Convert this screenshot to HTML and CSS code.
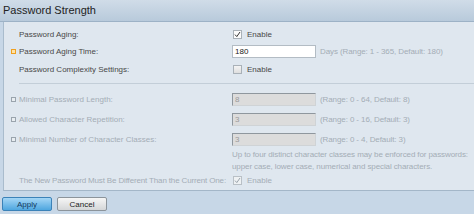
FILE: index.html
```html
<!DOCTYPE html>
<html>
<head>
    <title>Password Strength</title>
    <link rel="stylesheet" href="styles.css">
</head>
<body>
    <div class="page-title">Password Strength</div>

    <div class="panel">
        <div class="row r1">
            <span></span>
            <label>Password Aging:</label>
            <div class="ctrl">
                <span class="chk on"><svg width="7" height="7" viewBox="0 0 7 7"><path d="M1 3.6 L2.8 5.6 L6 1" fill="none" stroke="#333" stroke-width="1"/></svg></span>
                <span class="chk-text">Enable</span>
            </div>
        </div>
        <div class="row r2">
            <span class="mark req"></span>
            <label>Password Aging Time:</label>
            <div class="ctrl">
                <input type="text" class="field" value="180">
                <span class="hint">Days (Range: 1 - 365, Default: 180)</span>
            </div>
        </div>
        <div class="row r3">
            <span></span>
            <label>Password Complexity Settings:</label>
            <div class="ctrl">
                <span class="chk"></span>
                <span class="chk-text">Enable</span>
            </div>
        </div>

        <div class="sep"></div>

        <div class="row r4 off">
            <span class="mark"></span>
            <label>Minimal Password Length:</label>
            <div class="ctrl">
                <input type="text" class="field" value="8" disabled>
                <span class="hint">(Range: 0 - 64, Default: 8)</span>
            </div>
        </div>
        <div class="row r4 off">
            <span class="mark"></span>
            <label>Allowed Character Repetition:</label>
            <div class="ctrl">
                <input type="text" class="field" value="3" disabled>
                <span class="hint">(Range: 0 - 16, Default: 3)</span>
            </div>
        </div>
        <div class="row r6 off">
            <span class="mark"></span>
            <label>Minimal Number of Character Classes:</label>
            <div class="ctrl">
                <input type="text" class="field" value="3" disabled>
                <span class="hint">(Range: 0 - 4, Default: 3)</span>
            </div>
        </div>
        <div class="row help">
            <span></span>
            <span></span>
            <div class="help-text">Up to four distinct character classes may be enforced for passwords:<br>upper case, lower case, numerical and special characters.</div>
        </div>
        <div class="row r7 off">
            <span></span>
            <label class="long">The New Password Must Be Different Than the Current One:</label>
            <div class="ctrl">
                <span class="chk on dim"><svg width="7" height="7" viewBox="0 0 7 7"><path d="M1 3.6 L2.8 5.6 L6 1" fill="none" stroke="#9aa3ab" stroke-width="1"/></svg></span>
                <span class="chk-text">Enable</span>
            </div>
        </div>
    </div>

    <div class="buttons">
        <button class="btn apply">Apply</button>
        <button class="btn cancel">Cancel</button>
    </div>
</body>
</html>
```

FILE: styles.css
```css
body {
    margin: 0;
    font-family: "Liberation Sans", Arial, sans-serif;
    font-size: 8px;
    color: #333;
    background: #c7d7e7;
    width: 474px;
    height: 214px;
    overflow: hidden;
}

.page-title {
    height: 21px;
    line-height: 20px;
    padding-left: 3px;
    font-size: 11px;
    color: #222;
    background: linear-gradient(#d0dce8, #b8cadb);
    border-bottom: 1px solid #9db2c6;
}

.panel {
    margin-left: 3px;
    background: #dfe7ef;
    border-left: 1px solid #a9bccd;
    border-bottom: 1px solid #a3b6c8;
    padding-top: 4px;
    padding-bottom: 3px;
}

.row {
    display: grid;
    grid-template-columns: 15px 213px 1fr;
    align-items: center;
    white-space: nowrap;
}

.r1 { height: 16px; }
.r2 { height: 18px; }
.r3 { height: 18px; }
.r4 { height: 20px; }
.r6 { height: 20px; }
.r7 { height: 14px; }

label {
    color: #484848;
}

label.long {
    letter-spacing: -0.15px;
}

.off label,
.off .hint,
.off .chk-text {
    color: #a4adb6;
}

.mark {
    width: 3px;
    height: 3px;
    margin-left: 7px;
    border: 1px solid #9aa4ad;
    background: #e8edf1;
}

.mark.req {
    border-color: #f0a020;
    background: #fde3a8;
}

.ctrl {
    display: flex;
    align-items: center;
}

.chk {
    width: 7px;
    height: 7px;
    margin-left: 1px;
    border: 1px solid #a9b1b8;
    background: linear-gradient(#f4f4f4, #dedede);
    display: flex;
    align-items: center;
    justify-content: center;
}

.chk.on {
    background: #fbfbfb;
}

.chk.dim {
    border-color: #b9c0c6;
    background: #eef1f3;
}

.chk-text {
    margin-left: 5px;
    color: #484848;
}

.field {
    width: 84px;
    height: 13px;
    box-sizing: border-box;
    margin: 0;
    padding: 0 2px;
    font-family: "Liberation Sans", Arial, sans-serif;
    font-size: 8px;
    color: #222;
    background: #fff;
    border: 1px solid #b3bcc4;
}

.field:disabled {
    background: #dcdcdc;
    color: #9a9a9a;
    border-color: #8f979e #cfd3d6 #cfd3d6 #8f979e;
}

.hint {
    margin-left: 4px;
    color: #a4adb6;
    letter-spacing: -0.1px;
}

.sep {
    margin: 5px 0 5px 15px;
    border-top: 1px solid #c3ced8;
}

.help-text {
    line-height: 12px;
    color: #a4adb6;
    letter-spacing: -0.1px;
}

.buttons {
    display: flex;
    gap: 5px;
    padding: 6px 0 0 2px;
}

.btn {
    width: 50px;
    height: 14px;
    padding: 0;
    font-family: "Liberation Sans", Arial, sans-serif;
    font-size: 8px;
    border-radius: 2px;
}

.apply {
    color: #123a5e;
    background: linear-gradient(#a4d6f6, #4ea6df);
    border: 1px solid #3b82b8;
}

.cancel {
    color: #222;
    background: linear-gradient(#f6f6f6, #d4d6d8);
    border: 1px solid #8c949b;
}
```
